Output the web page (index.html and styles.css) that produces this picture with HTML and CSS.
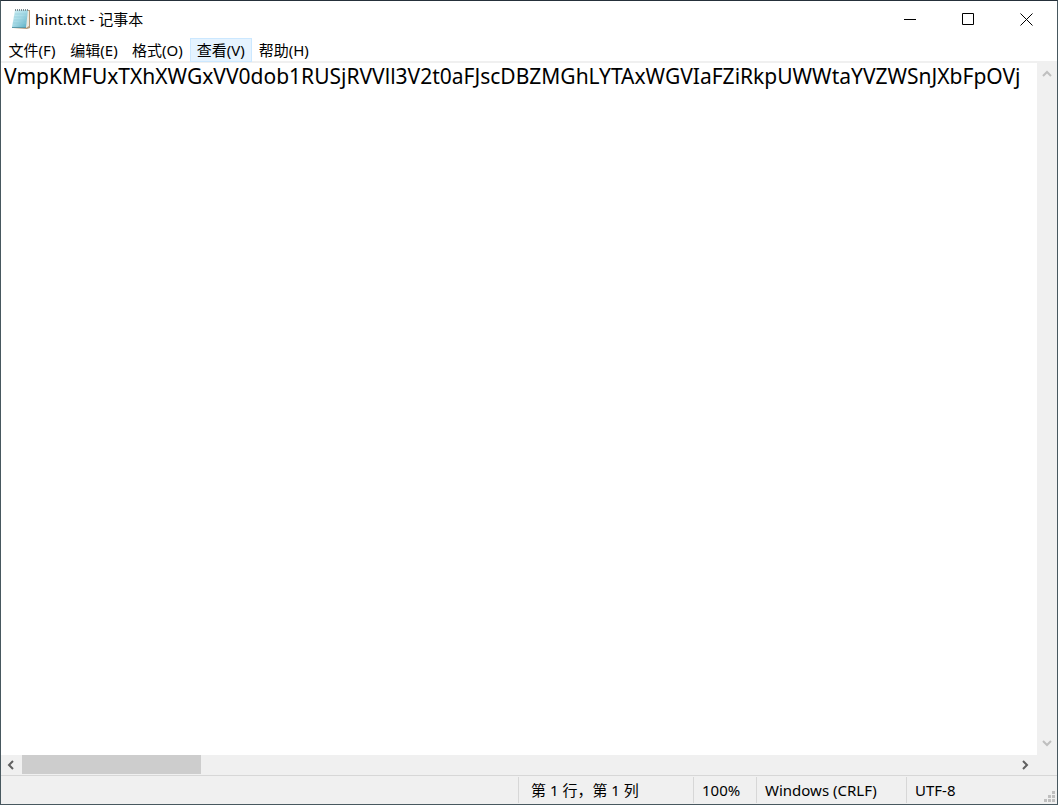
FILE: index.html
```
<!DOCTYPE html>
<html lang="zh-CN">
<head>
  <meta charset="UTF-8" />
  <title>hint.txt - 记事本</title>
  <link rel="stylesheet" href="styles.css">
</head>
<body>
  <div class="window">

    <!-- Title bar -->
    <header class="titlebar">
      <svg class="app-icon" width="20" height="22" viewBox="0 0 20 22" aria-hidden="true">
        <defs>
          <linearGradient id="page" x1="0" y1="0" x2="1" y2="1">
            <stop offset="0" stop-color="#d3f1f6" />
            <stop offset="0.5" stop-color="#a5d9e5" />
            <stop offset="1" stop-color="#58aec4" />
          </linearGradient>
        </defs>
        <path d="M5 3 L19 2 L19 20 L16 21 L2 20 Z" fill="#b39b7c" />
        <path d="M4 3 L18 3 L18 18 L15 20 L2 19 Z" fill="#eee9df" />
        <path d="M4 2 L17 2 L15 19 L1 19 Z" fill="url(#page)" />
        <path d="M4 6H16M3 9H16M3 12H15M2 15H15" stroke="#8fcad8" stroke-width="0.6" />
        <path d="M4 2H18" stroke="#7c8d93" stroke-width="2" stroke-dasharray="1 1" />
        <path d="M1 19.5H15" stroke="#5b98a8" />
      </svg>
      <h1 class="title">hint.txt - 记事本</h1>
      <div class="window-controls">
        <button type="button" aria-label="最小化">
          <svg width="13" height="13"><path d="M0 6.5H12" /></svg>
        </button>
        <button type="button" aria-label="最大化">
          <svg width="13" height="13"><path d="M0.5 0.5H11.5V11.5H0.5Z" /></svg>
        </button>
        <button type="button" aria-label="关闭">
          <svg width="13" height="13"><path d="M0.5 0.5L12.5 12.5M12.5 0.5L0.5 12.5" /></svg>
        </button>
      </div>
    </header>

    <nav class="menubar">
      <button type="button">文件(F)</button>
      <button type="button">编辑(E)</button>
      <button type="button">格式(O)</button>
      <button type="button" class="active">查看(V)</button>
      <button type="button">帮助(H)</button>
    </nav>

    <!-- Editor with its scroll bars -->
    <main class="editor">
      <textarea class="text" wrap="off" spellcheck="false" aria-label="文本编辑器">VmpKMFUxTXhXWGxVV0dob1RUSjRVVll3V2t0aFJscDBZMGhLYTAxWGVIaFZiRkpUWWtaYVZWSnJXbFpOVj</textarea>
      <div class="scroll-v">
        <button type="button" aria-label="向上滚动">
          <svg width="10" height="7"><path d="M1 6L5 2L9 6" /></svg>
        </button>
        <button type="button" aria-label="向下滚动">
          <svg width="10" height="7"><path d="M1 1L5 5L9 1" /></svg>
        </button>
      </div>
    </main>
    <div class="scroll-h">
      <button type="button" aria-label="向左滚动">
        <svg width="8" height="10"><path d="M6 1L2 5L6 9" /></svg>
      </button>
      <div class="track"><div class="thumb"></div></div>
      <button type="button" aria-label="向右滚动">
        <svg width="8" height="10"><path d="M2 1L6 5L2 9" /></svg>
      </button>
    </div>

    <footer class="statusbar">
      <span class="cell position">第 1 行，第 1 列</span>
      <span class="cell zoom">100%</span>
      <span class="cell line-ending">Windows (CRLF)</span>
      <span class="cell encoding">UTF-8</span>
      <svg class="grip" width="12" height="12" aria-hidden="true">
        <path d="M8 0h3v3h-3zM4 4h3v3h-3zM8 4h3v3h-3zM0 8h3v3h-3zM4 8h3v3h-3zM8 8h3v3h-3z" />
      </svg>
    </footer>

  </div>
</body>
</html>
```
FILE: styles.css
```
* {
  box-sizing: border-box;
}

body {
  margin: 0;
  font-family: "Noto Sans", "Noto Sans CJK SC", sans-serif;
  font-size: 15px;
  color: #000;
}

button {
  padding: 0;
  border: none;
  background: none;
  font: inherit;
  color: inherit;
}

svg {
  display: block;
}

.window {
  display: flex;
  flex-direction: column;
  height: 100vh;
  border: 1px solid #48585f;
  border-top-color: #25303a;
  background: #fff;
}

/* Title bar */
.titlebar {
  display: flex;
  align-items: center;
  height: 37px;
  padding: 0 2px 1px 10px;
}

.title {
  flex: 1;
  margin: 0 0 0 4px;
  font-size: 15px;
  font-weight: normal;
  line-height: 20px;
}

.window-controls {
  display: flex;
}

.window-controls button {
  display: flex;
  align-items: center;
  justify-content: center;
  width: 58px;
  height: 36px;
}

.window-controls path {
  fill: none;
  stroke: #000;
}

/* Menu */
.menubar {
  display: flex;
  height: 25px;
  border-bottom: 2px solid #f0f0f0;
}

.menubar button {
  min-width: 62px;
  height: 24px;
  padding: 0 6px;
  border: 1px solid transparent;
  line-height: 22px;
}

.menubar .active {
  border-color: #cce8ff;
  background: #e5f3ff;
}

/* Editor */
.editor {
  display: flex;
  flex: 1;
  min-height: 0;
}

.text {
  flex: 1;
  min-width: 0;
  margin: 0 8px 0 3px;
  padding: 0;
  border: none;
  outline: none;
  resize: none;
  overflow: hidden;
  background: #fff;
  color: #000;
  font-family: "Noto Sans", "Noto Sans CJK SC", sans-serif;
  font-size: 21px;
  line-height: 27px;
}

.scroll-v {
  display: flex;
  flex-direction: column;
  justify-content: space-between;
  width: 20px;
  padding-bottom: 2px;
  background: #f0f0f0;
}

.scroll-h {
  display: flex;
  height: 20px;
  background: #f0f0f0;
}

.scroll-v button,
.scroll-h button {
  display: flex;
  align-items: center;
  justify-content: center;
  width: 20px;
  height: 20px;
}

.scroll-v path,
.scroll-h path {
  fill: none;
  stroke: #bfbfbf;
  stroke-width: 2;
}

.scroll-h path {
  stroke: #606060;
}

.scroll-h button:last-child {
  margin-right: 22px;
}

.track {
  flex: 1;
}

.thumb {
  width: 18%;
  height: 19px;
  margin-left: 1px;
  background: #cdcdcd;
}

/* Status bar */
.statusbar {
  position: relative;
  display: flex;
  justify-content: flex-end;
  height: 29px;
  padding: 1px 0;
  border-top: 1px solid #d7d7d7;
  background: #f0f0f0;
}

.cell {
  padding-left: 8px;
  border-left: 1px solid #d7d7d7;
  line-height: 26px;
  white-space: nowrap;
}

.position {
  width: 175px;
  padding-left: 12px;
}

.zoom {
  width: 63px;
}

.line-ending {
  width: 150px;
}

.encoding {
  width: 151px;
}

.grip {
  position: absolute;
  right: 1px;
  bottom: 1px;
  fill: #bfbfbf;
}
```
